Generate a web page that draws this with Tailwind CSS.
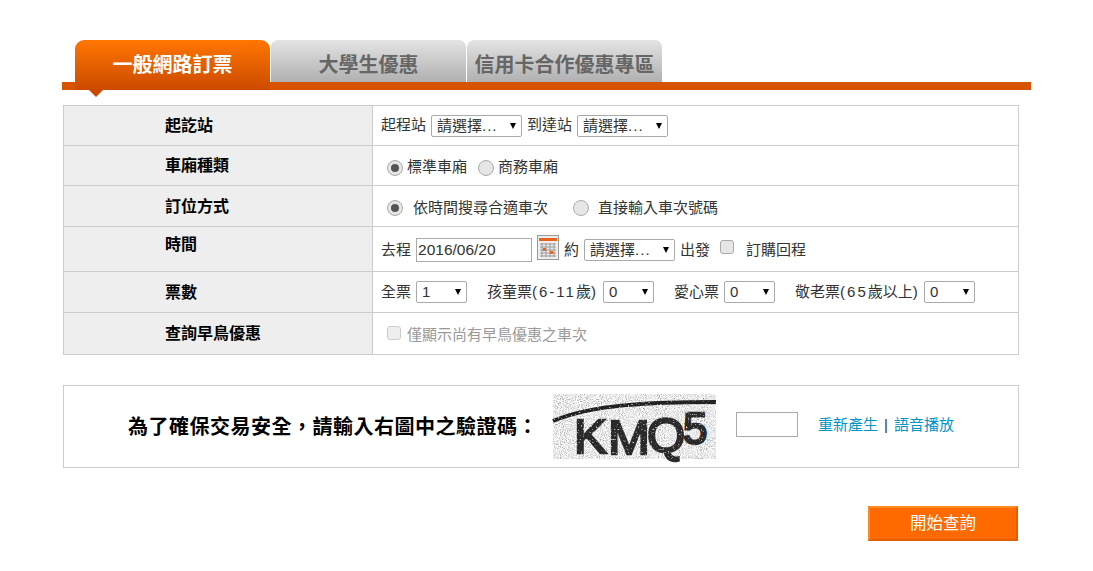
<!DOCTYPE html>
<html lang="zh-Hant">
<head>
    <meta charset="UTF-8">
    <title>線上訂票</title>
    <script src="https://cdn.jsdelivr.net/npm/@tailwindcss/browser@4"></script>
</head>
<body class="bg-white text-[#333] text-[15px] font-['Liberation_Sans','Noto_Sans_CJK_TC',sans-serif]">
<div class="w-[1093px] h-[571px] overflow-hidden pt-[40px] pl-[62px]">

    <!-- tabs -->
    <div class="w-[969px]">
        <div class="flex h-[42px] pl-[13px] gap-px">
            <div class="relative z-10 w-[195px] h-[50px] rounded-t-[9px] bg-gradient-to-b from-[#ff7600] to-[#cc4a00] text-white text-[20px] font-bold flex items-center justify-center">
                一般網路訂票
                <span class="absolute left-[14px] top-[50px] border-x-[7px] border-x-transparent border-t-[7px] border-t-[#cc4a00]"></span>
            </div>
            <div class="w-[195px] rounded-t-[7px] bg-gradient-to-b from-[#e4e4e4] to-[#b0b0b0] text-[#666] text-[20px] font-bold flex items-center justify-center pt-[8px]">大學生優惠</div>
            <div class="w-[195px] rounded-t-[7px] bg-gradient-to-b from-[#e4e4e4] to-[#b0b0b0] text-[#666] text-[20px] font-bold flex items-center justify-center pt-[8px]">信用卡合作優惠專區</div>
        </div>
        <div class="h-[8px] bg-[#d75300]"></div>
    </div>

    <!-- form table -->
    <div class="ml-px mt-[15px] w-[956px] border border-[#ccc]">
        <div class="flex h-[40px] border-b border-[#ccc]">
            <div class="w-[309px] shrink-0 bg-[#eee] border-r border-[#ccc] pl-[101px] pt-[9px] text-[16px] leading-[21px] font-bold text-black">起訖站</div>
            <div class="flex items-center pl-[8px] gap-[5px]">
                <span>起程站</span>
                <div class="relative w-[91px] h-[22px] border border-[#aaa] rounded-[2px] pl-[5px] leading-[20px]">請選擇<span class="tracking-[1px]">...</span><span class="absolute right-[5px] top-[7px] border-x-[3.5px] border-x-transparent border-t-[6px] border-t-black"></span></div>
                <span>到達站</span>
                <div class="relative w-[91px] h-[22px] border border-[#aaa] rounded-[2px] pl-[5px] leading-[20px]">請選擇<span class="tracking-[1px]">...</span><span class="absolute right-[5px] top-[7px] border-x-[3.5px] border-x-transparent border-t-[6px] border-t-black"></span></div>
            </div>
        </div>
        <div class="flex h-[40px] border-b border-[#ccc]">
            <div class="w-[309px] shrink-0 bg-[#eee] border-r border-[#ccc] pl-[101px] pt-[9px] text-[16px] leading-[21px] font-bold text-black">車廂種類</div>
            <div class="flex items-center pl-[14px] pt-[4px]">
                <span class="w-[16px] h-[16px] rounded-full border border-[#aaa] bg-[#e6e6e6] flex items-center justify-center"><span class="w-[8px] h-[8px] rounded-full bg-[#555]"></span></span>
                <span class="ml-[4px]">標準車廂</span>
                <span class="ml-[11px] w-[16px] h-[16px] rounded-full border border-[#aaa] bg-[#e6e6e6]"></span>
                <span class="ml-[4px]">商務車廂</span>
            </div>
        </div>
        <div class="flex h-[41px] border-b border-[#ccc]">
            <div class="w-[309px] shrink-0 bg-[#eee] border-r border-[#ccc] pl-[101px] pt-[10px] text-[16px] leading-[21px] font-bold text-black">訂位方式</div>
            <div class="flex items-center pl-[14px] pt-[4px]">
                <span class="w-[16px] h-[16px] rounded-full border border-[#aaa] bg-[#e6e6e6] flex items-center justify-center"><span class="w-[8px] h-[8px] rounded-full bg-[#555]"></span></span>
                <span class="ml-[10px]">依時間搜尋合適車次</span>
                <span class="ml-[25px] w-[16px] h-[16px] rounded-full border border-[#aaa] bg-[#e6e6e6]"></span>
                <span class="ml-[9px]">直接輸入車次號碼</span>
            </div>
        </div>
        <div class="flex h-[45px] border-b border-[#ccc]">
            <div class="w-[309px] shrink-0 bg-[#eee] border-r border-[#ccc] pl-[101px] pt-[7px] text-[16px] leading-[21px] font-bold text-black">時間</div>
            <div class="flex items-center pl-[8px] pt-[2px]">
                <span>去程</span>
                <div class="ml-[5px] w-[116px] h-[24px] border border-[#aaa] pl-[1px] text-[15.5px] leading-[22px]">2016/06/20</div>
                <svg class="ml-[5px] -mt-[5px]" width="22" height="25" viewBox="0 0 22 25">
                    <rect x="0.5" y="0.5" width="21" height="24" fill="#eee" stroke="#999"/>
                    <rect x="2" y="3" width="18" height="3" fill="#e8641b"/>
                    <path d="M3 9h16M3 12h16M3 15h16M3 18h16M3 21h16M5 8v14M9 8v14M13 8v14M17 8v14" stroke="#999" stroke-width="1"/>
                    <rect x="6" y="13" width="3" height="3" fill="#e8641b"/>
                    <rect x="13" y="16" width="3" height="3" fill="#e8641b"/>
                </svg>
                <span class="ml-[5px]">約</span>
                <div class="relative ml-[5px] w-[91px] h-[22px] border border-[#aaa] rounded-[2px] pl-[5px] leading-[20px]">請選擇<span class="tracking-[1px]">...</span><span class="absolute right-[5px] top-[7px] border-x-[3.5px] border-x-transparent border-t-[6px] border-t-black"></span></div>
                <span class="ml-[5px]">出發</span>
                <span class="ml-[10px] -mt-[6px] w-[14px] h-[14px] rounded-[3px] border border-[#aaa] bg-[#e6e6e6]"></span>
                <span class="ml-[12px]">訂購回程</span>
            </div>
        </div>
        <div class="flex h-[41px] border-b border-[#ccc]">
            <div class="w-[309px] shrink-0 bg-[#eee] border-r border-[#ccc] pl-[101px] pt-[10px] text-[16px] leading-[21px] font-bold text-black">票數</div>
            <div class="flex items-center pl-[8px]">
                <span>全票</span>
                <div class="relative ml-[5px] w-[51px] h-[22px] border border-[#aaa] rounded-[2px] pl-[5px] leading-[20px]">1<span class="absolute right-[5px] top-[7px] border-x-[3.5px] border-x-transparent border-t-[6px] border-t-black"></span></div>
                <span class="ml-[20px] w-[112px] whitespace-nowrap">孩童票<span class="tracking-[2px]">(6-11</span>歲)</span>
                <div class="relative ml-[4px] w-[51px] h-[22px] border border-[#aaa] rounded-[2px] pl-[5px] leading-[20px]">0<span class="absolute right-[5px] top-[7px] border-x-[3.5px] border-x-transparent border-t-[6px] border-t-black"></span></div>
                <span class="ml-[20px]">愛心票</span>
                <div class="relative ml-[5px] w-[51px] h-[22px] border border-[#aaa] rounded-[2px] pl-[5px] leading-[20px]">0<span class="absolute right-[5px] top-[7px] border-x-[3.5px] border-x-transparent border-t-[6px] border-t-black"></span></div>
                <span class="ml-[20px] w-[124px] whitespace-nowrap">敬老票<span class="tracking-[2px]">(65</span>歲以上)</span>
                <div class="relative ml-[5px] w-[51px] h-[22px] border border-[#aaa] rounded-[2px] pl-[5px] leading-[20px]">0<span class="absolute right-[5px] top-[7px] border-x-[3.5px] border-x-transparent border-t-[6px] border-t-black"></span></div>
            </div>
        </div>
        <div class="flex h-[41px]">
            <div class="w-[309px] shrink-0 bg-[#eee] border-r border-[#ccc] pl-[101px] pt-[10px] text-[16px] leading-[21px] font-bold text-black">查詢早鳥優惠</div>
            <div class="flex items-center pl-[14px] pt-[4px] text-[#999]">
                <span class="-mt-[6px] w-[14px] h-[14px] rounded-[3px] border border-[#ccc] bg-[#eee]"></span>
                <span class="ml-[6px]">僅顯示尚有早鳥優惠之車次</span>
            </div>
        </div>
    </div>

    <!-- captcha -->
    <div class="ml-px mt-[30px] w-[956px] h-[83px] border border-[#ccc] flex items-center">
        <span class="ml-[64px] w-[425px] text-[20px] tracking-[0.5px] font-bold text-black whitespace-nowrap">為了確保交易安全，請輸入右圖中之驗證碼：</span>
        <svg width="163" height="65" viewBox="0 0 163 65" class="shrink-0 overflow-visible">
            <filter id="grain" x="0" y="0" width="100%" height="100%"><feTurbulence type="fractalNoise" baseFrequency="0.95" numOctaves="2" seed="4"/><feColorMatrix values="1.5 0 0 0 0.08  1.5 0 0 0 0.08  1.5 0 0 0 0.08  0 0 0 0 1"/></filter>
            <filter id="speck" x="0" y="0" width="100%" height="100%"><feTurbulence type="fractalNoise" baseFrequency="0.6" numOctaves="1" seed="11"/><feColorMatrix values="0 0 0 0 0.75  0 0 0 0 0.75  0 0 0 0 0.75  6 0 0 0 -3.7"/></filter>
            <rect width="163" height="65" filter="url(#grain)"/>
            <path d="M0 27C40 10 100 8 163 8" fill="none" stroke="#222" stroke-width="4"/>
            <g fill="#2a2a2a" stroke="#2a2a2a" stroke-width="2.4" font-family="Liberation Sans" font-size="49">
                <text x="21" y="59">K</text>
                <text x="55" y="60" textLength="42" lengthAdjust="spacingAndGlyphs">M</text>
                <text x="94" y="58">Q</text>
                <text x="130" y="50" font-size="44">5</text>
            </g>
            <rect width="163" height="65" filter="url(#speck)"/>
        </svg>
        <div class="ml-[20px] -mt-[5px] w-[62px] h-[25px] border border-[#aaa]"></div>
        <a class="ml-[20px] -mt-[3px] text-[#0095c8]">重新產生</a>
        <span class="mx-[6px] -mt-[3px]">|</span>
        <a class="-mt-[3px] text-[#0095c8]">語音播放</a>
    </div>

    <!-- submit -->
    <div class="flex justify-end w-[956px] mt-[38px]">
        <button class="w-[150px] h-[35px] bg-[#ff6a00] border-2 border-t-[#ff8a20] border-l-[#ff8a20] border-r-[#e05f00] border-b-[#e05f00] text-white text-[16.5px]">開始查詢</button>
    </div>
</div>
</body>
</html>
